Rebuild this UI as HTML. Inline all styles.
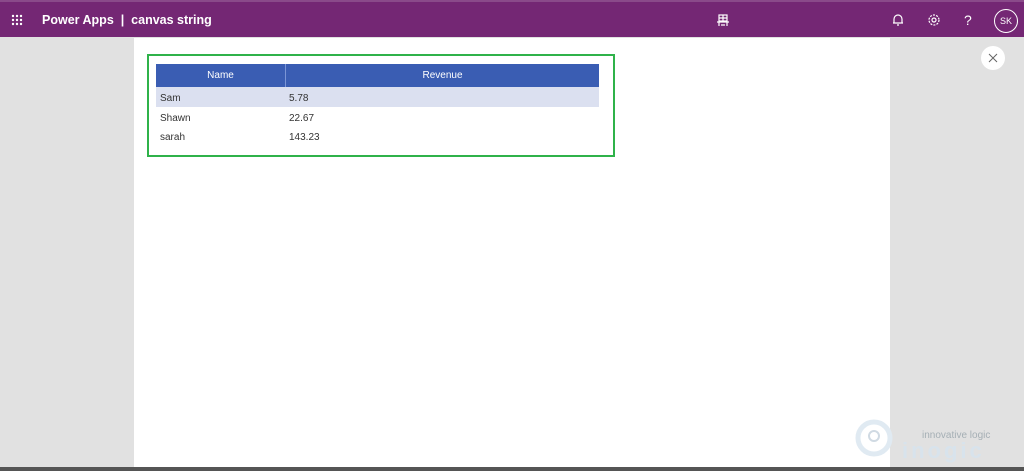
<!DOCTYPE html>
<html><head><style>
body{margin:0;width:1024px;height:471px;overflow:hidden;background:#e1e1e1;font-family:"Liberation Sans",sans-serif;position:relative}
.hdr{position:absolute;left:0;top:0;width:1024px;height:37px;background:#742774;border-top:2px solid #8a4a8a;box-sizing:border-box;color:#fff}
.canvas{position:absolute;left:134px;top:38px;width:756px;height:430px;background:#fff}
.bot{position:absolute;left:0;top:467px;width:1024px;height:4px;background:#555}
.t{position:absolute;font-size:10px;color:#333}
</style></head><body>
<div class="hdr">
<svg style="position:absolute;left:11px;top:12px" width="12" height="12"><g fill="#fff"><circle cx="2" cy="2" r="1.2"/><circle cx="6" cy="2" r="1.2"/><circle cx="10" cy="2" r="1.2"/><circle cx="2" cy="6" r="1.2"/><circle cx="6" cy="6" r="1.2"/><circle cx="10" cy="6" r="1.2"/><circle cx="2" cy="10" r="1.2"/><circle cx="6" cy="10" r="1.2"/><circle cx="10" cy="10" r="1.2"/></g></svg>
<div style="position:absolute;left:42px;top:11px;font-size:12.5px;font-weight:bold">Power Apps &nbsp;| &nbsp;canvas string</div>
<svg style="position:absolute;left:716px;top:11px" width="14" height="14" fill="none" stroke="#fff" stroke-width="1.2"><rect x="3" y="2" width="8" height="6"/><path d="M1 9h12M3 9v4M11 9v4M5 12h4M7 2v6M3 5h8"/></svg>
<svg style="position:absolute;left:892px;top:11px" width="12" height="14" fill="none" stroke="#fff" stroke-width="1.2"><path d="M2 10V6a4 4 0 0 1 8 0v4zM1 10h10M5 12h2"/></svg>
<svg style="position:absolute;left:927px;top:11px" width="14" height="14" fill="none" stroke="#fff" stroke-width="1.2"><circle cx="7" cy="7" r="2"/><circle cx="7" cy="7" r="5" stroke-dasharray="2 1.2"/></svg>
<div style="position:absolute;left:964px;top:10px;font-size:14px">?</div>
<div style="position:absolute;left:994px;top:7px;width:22px;height:22px;border:1px solid #fff;border-radius:50%;font-size:9px;text-align:center;line-height:22px">SK</div>
</div>
<div class="canvas"></div>
<div style="position:absolute;left:981px;top:46px;width:24px;height:24px;border-radius:50%;background:#fff"></div>
<svg style="position:absolute;left:988px;top:53px" width="10" height="10" stroke="#666" stroke-width="1"><path d="M1 1L9 9M9 1L1 9"/></svg>
<div style="position:absolute;left:147px;top:54px;width:468px;height:103px;border:2px solid #2fb24a;box-sizing:border-box"></div>
<div style="position:absolute;left:156px;top:64px;width:443px;height:23px;background:#3a5db3"></div>
<div style="position:absolute;left:285px;top:64px;width:1px;height:23px;background:#7b95d6"></div>
<div style="position:absolute;left:156px;top:70px;width:129px;text-align:center;color:#fff;font-size:10px">Name</div>
<div style="position:absolute;left:286px;top:70px;width:313px;text-align:center;color:#fff;font-size:10px">Revenue</div>
<div style="position:absolute;left:156px;top:87px;width:443px;height:20px;background:#dbe0f0"></div>
<div class="t" style="left:160px;top:93px">Sam</div><div class="t" style="left:289px;top:93px">5.78</div>
<div class="t" style="left:160px;top:113px">Shawn</div><div class="t" style="left:289px;top:113px">22.67</div>
<div class="t" style="left:160px;top:132px">sarah</div><div class="t" style="left:289px;top:132px">143.23</div>
<svg style="position:absolute;left:852px;top:414px" width="44" height="46" fill="none"><circle cx="22" cy="24" r="16" stroke="#e0eaf2" stroke-width="5"/><circle cx="22" cy="22" r="5" stroke="#d0dae3" stroke-width="2"/></svg>
<div style="position:absolute;left:922px;top:430px;font-size:10px;color:#a5afb5">innovative logic</div>
<div style="position:absolute;left:902px;top:438px;font-size:22px;color:#d8e3ec;letter-spacing:3px;font-weight:bold">inogic</div>
<div class="bot"></div>
</body></html>
